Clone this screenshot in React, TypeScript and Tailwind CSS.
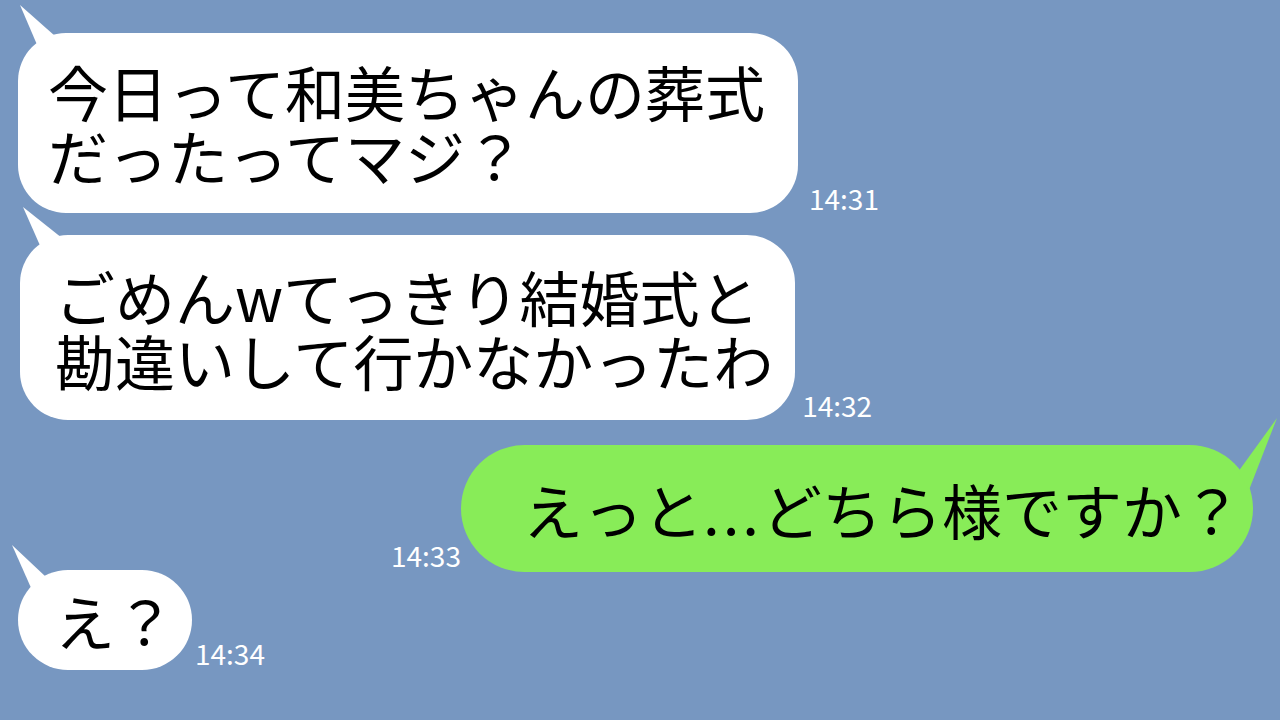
const jp = "font-['Noto_Sans_CJK_JP','Noto_Sans',sans-serif]"

function LeftTail({ points }: { points: string }) {
  return (
    <svg className="absolute left-[-8px] top-[-30px]" width="56" height="60" viewBox="0 0 56 60">
      <polygon points={points} fill="#ffffff" />
    </svg>
  )
}

function Time({ t, className = '' }: { t: string; className?: string }) {
  return <span className={`text-[28px] leading-none text-white ${className}`}>{t}</span>
}

export default function App() {
  return (
    <div className={`w-[1280px] h-[720px] overflow-hidden bg-[#7797c1] flex flex-col text-black ${jp}`}>
      {/* message 1 */}
      <div className="flex items-end gap-[11px] pl-[18px] pt-[33px]">
        <div className="relative rounded-[48px] bg-white pl-[30px] pr-[33px] pt-[26px] pb-[26px] text-[60px] leading-[64px]">
          <LeftTail points="10,2 28,44 45,33" />
          <div className="relative">今日って和美ちゃんの葬式</div>
          <div className="relative">だったってマジ？</div>
        </div>
        <Time t="14:31" className="mb-[1px]" />
      </div>

      {/* message 2 */}
      <div className="flex items-end gap-[7px] pl-[20px] mt-[22px]">
        <div className="relative rounded-[48px] bg-white pl-[35px] pr-[22px] pt-[29px] pb-[28px] text-[60px] leading-[64px]">
          <LeftTail points="11,2 30,45 50,33" />
          <div className="relative">ごめんwてっきり結婚式と</div>
          <div className="relative">勘違いして行かなかったわ</div>
        </div>
        <Time t="14:32" className="mb-[1px]" />
      </div>

      {/* message 3 (mine) */}
      <div className="flex items-end justify-end gap-0 pr-[27px] mt-[25px]">
        <Time t="14:33" className="mb-[3px]" />
        <div className="relative rounded-[64px] bg-[#88ec58] pl-[62px] pr-[11px] pt-[32px] pb-[31px] text-[60px] leading-[64px]">
          <svg className="absolute right-[-26px] top-[-30px]" width="70" height="80" viewBox="0 0 70 80">
            <polygon points="68,3 29,57 40,75" fill="#88ec58" />
          </svg>
          <div className="relative whitespace-nowrap">
            えっと<span className="tracking-[3px]">...</span>どちら様ですか？
          </div>
        </div>
      </div>

      {/* message 4 */}
      <div className="flex items-end gap-[3px] pl-[18px] mt-[-2px]">
        <div className="relative rounded-[50px] bg-white pl-[37px] pr-[17px] py-[18px] text-[60px] leading-[64px]">
          <LeftTail points="2,5 22,50 36,37" />
          <div className="relative">え？</div>
        </div>
        <Time t="14:34" className="mb-[3px]" />
      </div>
    </div>
  )
}
